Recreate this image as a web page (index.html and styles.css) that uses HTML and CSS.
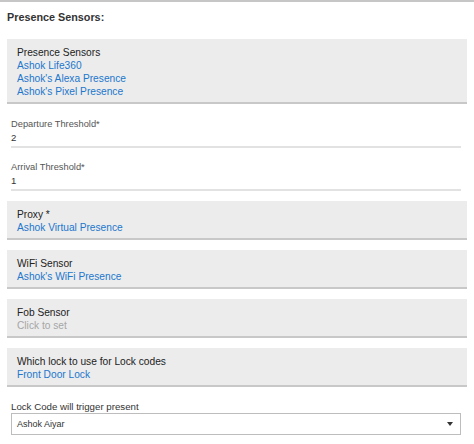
FILE: index.html
```html
<!DOCTYPE html>
<html>
<head>
<meta charset="utf-8">
<link rel="stylesheet" href="styles.css">
</head>
<body>
<div class="page">
  <div class="title">Presence Sensors:</div>

  <div class="card first">
    <div class="card-label">Presence Sensors</div>
    <div class="link">Ashok Life360</div>
    <div class="link">Ashok's Alexa Presence</div>
    <div class="link">Ashok's Pixel Presence</div>
  </div>

  <div class="field first-field">
    <div class="field-label">Departure Threshold*</div>
    <div class="field-value">2</div>
  </div>
  <div class="field">
    <div class="field-label">Arrival Threshold*</div>
    <div class="field-value">1</div>
  </div>

  <div class="card">
    <div class="card-label">Proxy *</div>
    <div class="link">Ashok Virtual Presence</div>
  </div>
  <div class="card">
    <div class="card-label">WiFi Sensor</div>
    <div class="link">Ashok's WiFi Presence</div>
  </div>
  <div class="card">
    <div class="card-label">Fob Sensor</div>
    <div class="placeholder">Click to set</div>
  </div>
  <div class="card">
    <div class="card-label">Which lock to use for Lock codes</div>
    <div class="link">Front Door Lock</div>
  </div>

  <div class="select-field">
    <div class="select-label">Lock Code will trigger present</div>
    <div class="select">
      <span class="select-text">Ashok Aiyar</span>
      <span class="caret"></span>
    </div>
  </div>
</div>
</body>
</html>
```
FILE: styles.css
```css
html, body {
  margin: 0;
  padding: 0;
  background: #ffffff;
}
body {
  font-family: "Liberation Sans", Arial, Helvetica, sans-serif;
  color: #222;
  width: 474px;
  height: 444px;
  overflow: hidden;
}
.page {
  border-top: 2px solid #c6c6c6;
}
.title {
  font-weight: bold;
  font-size: 10.8px;
  line-height: 14px;
  padding: 8px 0 0 7px;
  color: #333;
}
.card {
  margin: 0 7px 10px 7px;
  background: #ececec;
  border-bottom: 2px solid #c8c8c8;
  padding: 7px 10px 4px 10px;
  font-size: 10.2px;
  line-height: 13px;
}
.card.first {
  margin-top: 15px;
  margin-bottom: 0;
}
.card-label {
  color: #222;
}
.link {
  color: #2177cc;
}
.placeholder {
  color: #a6a6a6;
}
.field {
  margin: 0 13px 10px 11px;
  border-bottom: 2px solid #e2e2e2;
  padding-bottom: 1px;
}
.field.first-field {
  margin-top: 14px;
  margin-bottom: 13px;
}
.field-label {
  font-size: 9.3px;
  line-height: 13px;
  color: #555;
}
.field-value {
  font-size: 9.6px;
  line-height: 14px;
  color: #333;
}
.select-field {
  margin: 13px 13px 0 11px;
}
.select-label {
  font-size: 9.7px;
  line-height: 13px;
  color: #333;
}
.select {
  display: flex;
  align-items: center;
  justify-content: space-between;
  height: 20px;
  border: 1px solid #bdbdbd;
  padding: 0 6px 0 5px;
}
.select-text {
  font-size: 9px;
  color: #333;
}
.caret {
  width: 0;
  height: 0;
  border-left: 3.5px solid transparent;
  border-right: 3.5px solid transparent;
  border-top: 4px solid #333;
  margin-right: 1px;
}
```
